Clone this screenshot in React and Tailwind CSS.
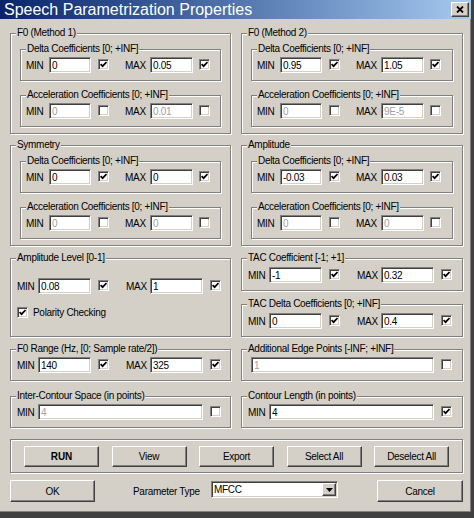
import React from 'react';

const etched = 'border border-[#808080] shadow-[inset_1px_1px_0_#fff,1px_1px_0_#fff]';
const sunken =
  'border border-t-[#808080] border-l-[#808080] border-b-white border-r-white shadow-[inset_1px_1px_0_#404040,inset_-1px_-1px_0_#d4d0c8]';
const raised =
  'border border-t-white border-l-white border-b-[#404040] border-r-[#404040] shadow-[inset_-1px_-1px_0_#808080]';

const Group = ({ label, className = '', children }) => (
  <div className={`relative ${etched} ${className}`}>
    <span className="absolute left-[5px] -top-[7px] bg-[#d4d0c8] px-[1px] leading-[12px] whitespace-nowrap">
      {label}
    </span>
    {children}
  </div>
);

const Check = ({ checked }) => (
  <span className={`flex h-[11px] w-[11px] shrink-0 items-center justify-center bg-white ${sunken}`}>
    {checked && (
      <svg width="7" height="7" viewBox="0 0 7 7">
        <path d="M0.6 3.2 L2.6 5.2 L6.5 1.1" fill="none" stroke="#000" strokeWidth="1.7" />
      </svg>
    )}
  </span>
);

const Field = ({ value, w, off }) => (
  <input
    readOnly
    value={value}
    className={`h-[16px] ${w} shrink-0 bg-white pl-[2px] outline-none ${sunken} ${off ? 'text-[#a0a0a0]' : 'text-black'}`}
  />
);

// row inside a nested coefficient box
const InnerRow = ({ min, max, on, off }) => (
  <div className="flex items-center pl-[5px] pt-[7px]">
    <span className="w-[23px]">MIN</span>
    <Field value={min} w="w-[42px]" off={off} />
    <span className="ml-[7px] mb-[2px]">
      <Check checked={on} />
    </span>
    <span className="ml-[16px] w-[25px]">MAX</span>
    <Field value={max} w="w-[43px]" off={off} />
    <span className="ml-[6px] mb-[2px]">
      <Check checked={on} />
    </span>
  </div>
);

// row directly inside a single group
const FlatRow = ({ min, max, on, className = '' }) => (
  <div className={`flex items-center pl-[6px] ${className}`}>
    <span className="w-[21px]">MIN</span>
    <Field value={min} w="w-[53px]" />
    <span className="ml-[7px] mb-[2px]">
      <Check checked={on} />
    </span>
    <span className="ml-[17px] w-[24px]">MAX</span>
    <Field value={max} w="w-[53px]" />
    <span className="ml-[7px] mb-[2px]">
      <Check checked={on} />
    </span>
  </div>
);

const Coeffs = ({ label, delta, accel }) => (
  <Group label={label} className="flex h-[101px] flex-col gap-[14px] px-[9px] pt-[15px]">
    <Group label="Delta Coefficients [0; +INF]" className="h-[32px]">
      <InnerRow min={delta[0]} max={delta[1]} on />
    </Group>
    <Group label="Acceleration Coefficients [0; +INF]" className="h-[32px]">
      <InnerRow min={accel[0]} max={accel[1]} off />
    </Group>
  </Group>
);

const Btn = ({ children, className = '' }) => (
  <button className={`flex items-center justify-center bg-[#d4d0c8] text-black ${raised} ${className}`}>
    {children}
  </button>
);

export default function App() {
  return (
    <div className="flex h-[518px] w-[474px] flex-col border-r-[3px] border-b-[6px] border-[#404040] bg-[#d4d0c8] font-['Liberation_Sans',Arial,sans-serif] text-[10px] tracking-[-0.3px] text-black shadow-[inset_-1px_-1px_0_#808080]">
      {/* title bar */}
      <div className="flex h-[19px] shrink-0 items-center justify-between bg-linear-to-r from-[#0a246a] to-[#a6caf0] pl-[4px] pr-[2px]">
        <span className="text-[16px] leading-[19px] tracking-normal text-white">Speech Parametrization Properties</span>
        <button className={`flex h-[15px] w-[18px] items-center justify-center bg-[#d4d0c8] ${raised}`}>
          <svg width="8" height="7" viewBox="0 0 8 7">
            <path d="M1 0.5 L7 6.5 M7 0.5 L1 6.5" stroke="#000" strokeWidth="1.8" />
          </svg>
        </button>
      </div>

      <div className="flex flex-col pl-[10px] pr-[8px] pt-[14px]">
        <div className="flex gap-[10px]">
          {/* left column */}
          <div className="flex w-[221px] flex-col">
            <Coeffs label="F0 (Method 1)" delta={['0', '0.05']} accel={['0', '0.01']} />
            <div className="mt-[11px]">
              <Coeffs label="Symmetry" delta={['0', '0']} accel={['0', '0']} />
            </div>
            <Group label="Amplitude Level [0-1]" className="mt-[12px] h-[79px] pt-[19px]">
              <FlatRow min="0.08" max="1" on />
              <div className="mt-[12px] flex h-[13px] items-center pl-[6px]">
                <Check checked />
                <span className="ml-[5px]">Polarity Checking</span>
              </div>
            </Group>
            <Group label="F0 Range (Hz, [0; Sample rate/2])" className="mt-[12px] h-[32px] pt-[7px]">
              <FlatRow min="140" max="325" on />
            </Group>
            <Group label="Inter-Contour Space (in points)" className="mt-[15px] h-[32px] pt-[7px]">
              <div className="flex items-center pl-[6px]">
                <span className="w-[21px]">MIN</span>
                <Field value="4" w="w-[165px]" off />
                <span className="ml-[7px] mb-[2px]">
                  <Check />
                </span>
              </div>
            </Group>
          </div>

          {/* right column */}
          <div className="flex w-[222px] flex-col">
            <Coeffs label="F0 (Method 2)" delta={['0.95', '1.05']} accel={['0', '9E-5']} />
            <div className="mt-[11px]">
              <Coeffs label="Amplitude" delta={['-0.03', '0.03']} accel={['0', '0']} />
            </div>
            <Group label="TAC Coefficient [-1; +1]" className="mt-[12px] h-[33px] pt-[8px]">
              <FlatRow min="-1" max="0.32" on />
            </Group>
            <Group label="TAC Delta Coefficients [0; +INF]" className="mt-[13px] h-[33px] pt-[8px]">
              <FlatRow min="0" max="0.4" on />
            </Group>
            <Group label="Additional Edge Points [-INF; +INF]" className="mt-[12px] h-[32px] pt-[7px]">
              <div className="flex items-center pl-[9px]">
                <Field value="1" w="w-[183px]" off />
                <span className="ml-[7px] mb-[2px]">
                  <Check />
                </span>
              </div>
            </Group>
            <Group label="Contour Length (in points)" className="mt-[15px] h-[32px] pt-[7px]">
              <div className="flex items-center pl-[6px]">
                <span className="w-[21px]">MIN</span>
                <Field value="4" w="w-[165px]" />
                <span className="ml-[7px] mb-[2px]">
                  <Check checked />
                </span>
              </div>
            </Group>
          </div>
        </div>

        {/* action buttons */}
        <div className={`mt-[11px] flex h-[34px] gap-[12.5px] pl-[13px] pt-[6px] ${etched}`}>
          <Btn className="h-[21px] w-[75px] font-bold tracking-normal">RUN</Btn>
          <Btn className="h-[21px] w-[75px]">View</Btn>
          <Btn className="h-[21px] w-[75px]">Export</Btn>
          <Btn className="h-[21px] w-[75px]">Select All</Btn>
          <Btn className="h-[21px] w-[75px]">Deselect All</Btn>
        </div>

        {/* bottom row */}
        <div className="mt-[7px] flex h-[22px] items-center">
          <Btn className="h-[22px] w-[85px]">OK</Btn>
          <span className="ml-[38px] w-[78px]">Parameter Type</span>
          <div className={`mb-[3px] flex h-[17px] w-[127px] items-center justify-between bg-white pl-[2px] pr-[1px] ${sunken}`}>
            <span>MFCC</span>
            <span className={`flex h-[13px] w-[14px] items-center justify-center bg-[#d4d0c8] ${raised}`}>
              <svg width="7" height="4" viewBox="0 0 7 4">
                <path d="M0 0 H7 L3.5 4 Z" fill="#000" />
              </svg>
            </span>
          </div>
          <Btn className="ml-auto h-[22px] w-[86px]">Cancel</Btn>
        </div>
      </div>
    </div>
  );
}
